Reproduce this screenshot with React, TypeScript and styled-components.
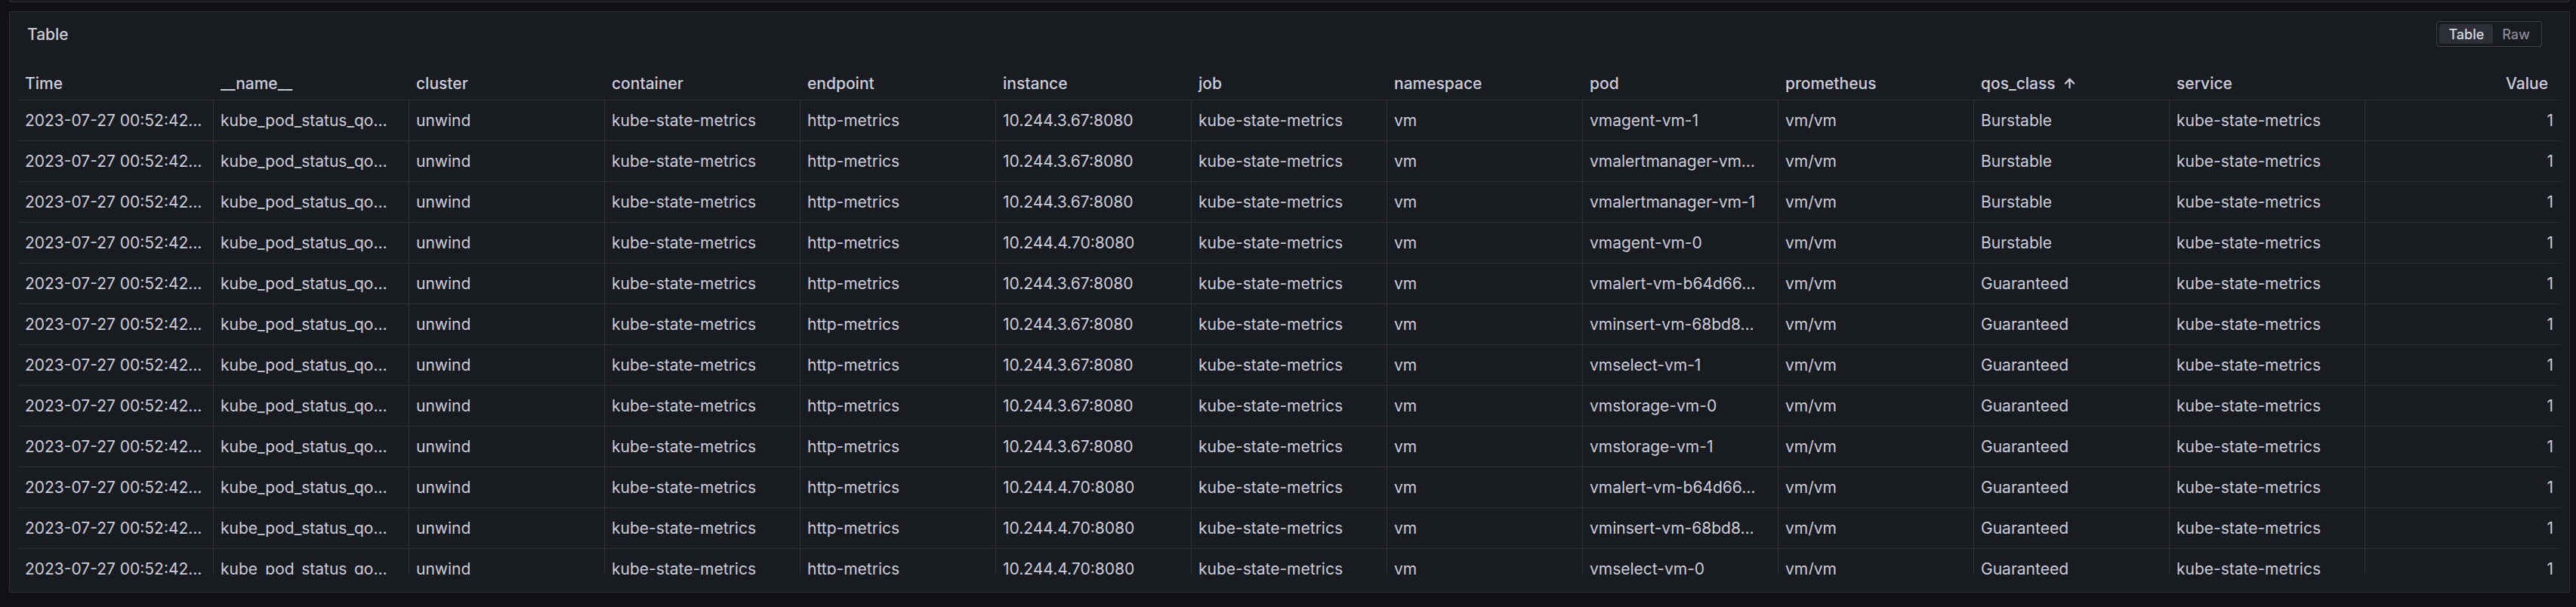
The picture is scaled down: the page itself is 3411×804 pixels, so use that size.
import React from "react";
import styled, { createGlobalStyle } from "styled-components";

const GlobalStyle = createGlobalStyle`
  html, body {
    margin: 0;
    padding: 0;
    background: #111217;
  }
  body {
    font-family: Inter, "Noto Sans", "Liberation Sans", sans-serif;
    color: #ccccdc;
    -webkit-font-smoothing: antialiased;
  }
  * { box-sizing: border-box; }
`;

const Page = styled.div`
  width: 3411px;
  height: 804px;
  overflow: hidden;
  padding: 0 8px 0 12px;
  display: flex;
  flex-direction: column;
  gap: 12px;
`;

const PrevPanelEdge = styled.div`
  height: 3px;
  background: #181b1f;
  border: 1px solid rgba(204, 204, 220, 0.12);
  border-top: none;
  border-radius: 0 0 3px 3px;
`;

const Panel = styled.section`
  height: 770px;
  background: #181b1f;
  border: 1px solid rgba(204, 204, 220, 0.12);
  border-radius: 3px;
  padding: 12px 11px;
  display: flex;
  flex-direction: column;
`;

const PanelHeader = styled.header`
  height: 34px;
  display: flex;
  align-items: center;
  justify-content: space-between;
  padding: 0 25px 0 12px;
`;

const Title = styled.h2`
  margin: 0;
  font-size: 21px;
  font-weight: 500;
  color: #ccccdc;
  line-height: 1;
`;

const Toggle = styled.div`
  display: flex;
  height: 34px;
  padding: 3px;
  border: 1px solid rgba(204, 204, 220, 0.2);
  border-radius: 3px;
`;

const ToggleButton = styled.button<{ $active?: boolean }>`
  border: none;
  margin: 0;
  height: 100%;
  padding: 0 12px;
  border-radius: 3px;
  font-family: Inter, "Noto Sans", "Liberation Sans", sans-serif;
  font-size: 18px;
  font-weight: 500;
  background: ${(p) => (p.$active ? "#2c2f35" : "transparent")};
  color: ${(p) => (p.$active ? "#d8d9e3" : "rgba(204, 204, 220, 0.65)")};
  cursor: pointer;
`;

const Table = styled.div`
  margin-top: 16px;
  display: flex;
  flex-direction: column;
`;

const HeaderRow = styled.div`
  height: 55px;
  display: grid;
  grid-template-columns: repeat(13, minmax(0, 1fr));
  border-bottom: 1px solid rgba(204, 204, 220, 0.12);
`;

const HeaderCell = styled.div<{ $right?: boolean }>`
  display: flex;
  align-items: center;
  justify-content: ${(p) => (p.$right ? "flex-end" : "flex-start")};
  padding: 11px ${(p) => (p.$right ? "17px" : "9px")} 0 9px;
  font-size: 21px;
  font-weight: 500;
  color: #ccccdc;
  white-space: nowrap;
  gap: 5px;
`;

const SortIcon = styled.svg`
  width: 27px;
  height: 27px;
  fill: #ccccdc;
  flex: none;
`;

const Body = styled.div`
  height: 628px;
  overflow: hidden;
`;

const Row = styled.div`
  height: 54px;
  display: grid;
  grid-template-columns: repeat(13, minmax(0, 1fr));
  border-bottom: 1px solid rgba(204, 204, 220, 0.12);
`;

const Cell = styled.div<{ $right?: boolean; $last?: boolean }>`
  display: flex;
  align-items: center;
  justify-content: ${(p) => (p.$right ? "flex-end" : "flex-start")};
  padding: 0 ${(p) => (p.$right ? "10px" : "9px")} 0 9px;
  font-size: 21px;
  font-weight: 400;
  color: #ccccdc;
  white-space: nowrap;
  overflow: hidden;
  border-right: ${(p) => (p.$last ? "none" : "1px solid rgba(204, 204, 220, 0.12)")};
`;

const columns = [
  "Time",
  "__name__",
  "cluster",
  "container",
  "endpoint",
  "instance",
  "job",
  "namespace",
  "pod",
  "prometheus",
  "qos_class",
  "service",
  "Value",
];

const rows: [string, string, string][] = [
  ["10.244.3.67:8080", "vmagent-vm-1", "Burstable"],
  ["10.244.3.67:8080", "vmalertmanager-vm…", "Burstable"],
  ["10.244.3.67:8080", "vmalertmanager-vm-1", "Burstable"],
  ["10.244.4.70:8080", "vmagent-vm-0", "Burstable"],
  ["10.244.3.67:8080", "vmalert-vm-b64d66…", "Guaranteed"],
  ["10.244.3.67:8080", "vminsert-vm-68bd8…", "Guaranteed"],
  ["10.244.3.67:8080", "vmselect-vm-1", "Guaranteed"],
  ["10.244.3.67:8080", "vmstorage-vm-0", "Guaranteed"],
  ["10.244.3.67:8080", "vmstorage-vm-1", "Guaranteed"],
  ["10.244.4.70:8080", "vmalert-vm-b64d66…", "Guaranteed"],
  ["10.244.4.70:8080", "vminsert-vm-68bd8…", "Guaranteed"],
  ["10.244.4.70:8080", "vmselect-vm-0", "Guaranteed"],
];

const ArrowUp = () => (
  <SortIcon viewBox="0 0 24 24">
    <path d="M17.71,11.29l-5-5a1,1,0,0,0-.33-.21,1,1,0,0,0-.76,0,1,1,0,0,0-.33.21l-5,5a1,1,0,0,0,1.42,1.42L11,9.41V17a1,1,0,0,0,2,0V9.41l3.29,3.3a1,1,0,0,0,1.42,0A1,1,0,0,0,17.71,11.29Z" />
  </SortIcon>
);

export default function App() {
  return (
    <>
      <GlobalStyle />
      <Page>
        <PrevPanelEdge />
        <Panel>
          <PanelHeader>
            <Title>Table</Title>
            <Toggle>
              <ToggleButton $active>Table</ToggleButton>
              <ToggleButton>Raw</ToggleButton>
            </Toggle>
          </PanelHeader>
          <Table>
            <HeaderRow>
              {columns.map((c) => (
                <HeaderCell key={c} $right={c === "Value"}>
                  {c}
                  {c === "qos_class" && <ArrowUp />}
                </HeaderCell>
              ))}
            </HeaderRow>
            <Body>
              {rows.map(([instance, pod, qos], i) => {
                const cells = [
                  "2023-07-27 00:52:42…",
                  "kube_pod_status_qo…",
                  "unwind",
                  "kube-state-metrics",
                  "http-metrics",
                  instance,
                  "kube-state-metrics",
                  "vm",
                  pod,
                  "vm/vm",
                  qos,
                  "kube-state-metrics",
                  "1",
                ];
                return (
                  <Row key={i}>
                    {cells.map((v, j) => (
                      <Cell key={j} $right={j === 12} $last={j === 12}>
                        {v}
                      </Cell>
                    ))}
                  </Row>
                );
              })}
            </Body>
          </Table>
        </Panel>
      </Page>
    </>
  );
}
